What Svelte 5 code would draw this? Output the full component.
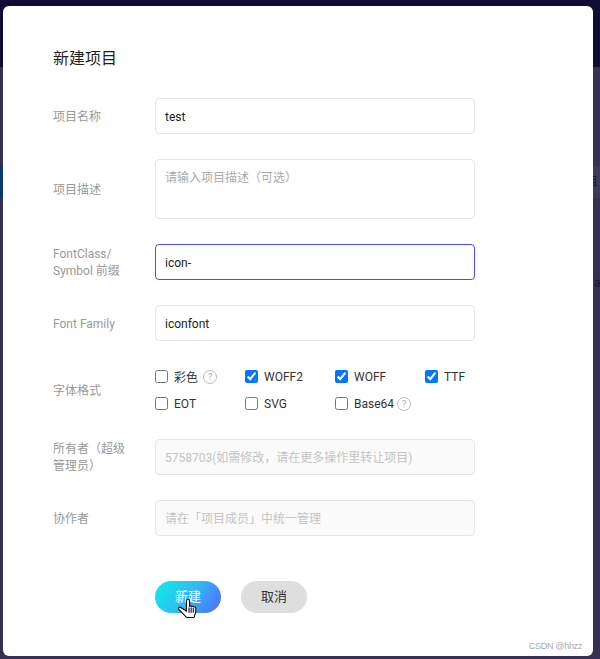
<script>
  const formats = [
    { name: '彩色', checked: false, help: true },
    { name: 'WOFF2', checked: true },
    { name: 'WOFF', checked: true },
    { name: 'TTF', checked: true },
    { name: 'EOT', checked: false },
    { name: 'SVG', checked: false },
    { name: 'Base64', checked: false, help: true }
  ];
</script>

<div class="page">
  <div class="topbar"></div>
  <div class="under left"></div>
  <div class="under right"><span>目</span></div>
  <span class="stray">a</span>

  <div class="modal">
    <h2 class="title">新建项目</h2>

    <div class="field">
      <span class="label">项目名称</span>
      <div class="input">test</div>
    </div>

    <div class="field">
      <span class="label">项目描述</span>
      <div class="input area placeholder">请输入项目描述（可选）</div>
    </div>

    <div class="field">
      <span class="label">FontClass/<br />Symbol 前缀</span>
      <div class="input focused">icon-</div>
    </div>

    <div class="field">
      <span class="label">Font Family</span>
      <div class="input">iconfont</div>
    </div>

    <div class="field">
      <span class="label">字体格式</span>
      <div class="formats">
        {#each formats as f}
          <label class="format">
            <input type="checkbox" checked={f.checked} />
            <span>{f.name}</span>
            {#if f.help}<i class="help">?</i>{/if}
          </label>
        {/each}
      </div>
    </div>

    <div class="field">
      <span class="label">所有者（超级<br />管理员）</span>
      <div class="input disabled">5758703(如需修改，请在更多操作里转让项目)</div>
    </div>

    <div class="field">
      <span class="label">协作者</span>
      <div class="input disabled">请在「项目成员」中统一管理</div>
    </div>

    <div class="actions">
      <button class="btn primary">新建
        <svg class="cursor" width="20" height="21" viewBox="0 0 19 18">
          <path d="M9.500.5c.9 0 1.500.6 1.500 1.500v4.800c.8-.4 1.600-.3 2 .3.800-.4 1.600-.2 2 .4.900-.3 1.900.2 1.900 1.300v3.200c0 1-.3 1.700-.8 2.500l-.6 2.500c-.1.300-.3.500-.6.500H8.500c-.3 0-.5-.1-.7-.3L1 10c-.6-.7-.5-1.500.1-2 .6-.4 1.400-.3 2 .3l4.900 3.200V2c0-.9.600-1.500 1.500-1.500z" fill="#fff" stroke="#000" stroke-width="1"/>
          <path d="M10.500 8v5M12.500 8v5M14.500 8.500v4.500" stroke="#000" stroke-width="1" fill="none"/>
        </svg>
      </button>
      <button class="btn cancel">取消</button>
    </div>

    <span class="watermark">CSDN @hhzz</span>
  </div>
</div>

<style>
  :global(body) {
    margin: 0;
    background: #373055;
  }

  .page {
    position: relative;
    width: 600px;
    height: 659px;
    overflow: hidden;
    background: #373055;
    font-family: Roboto, "Noto Sans CJK SC", sans-serif;
  }

  .topbar {
    height: 67px;
    background: #110c33;
  }

  /* bits of the dimmed page showing beside the dialog */
  .under {
    position: absolute;
    top: 166px;
    width: 8px;
    height: 32px;
  }

  .left {
    left: 0;
    background: #0e3868;
  }

  .right {
    right: 0;
    background: #3e3a5a;
    font-size: 12px;
    line-height: 32px;
    color: #1d1838;
  }

  .right span {
    display: block;
    margin-left: -6px;
  }

  .stray {
    position: absolute;
    left: 594px;
    top: 276px;
    font-size: 12px;
    color: #1d1838;
  }

  /* dialog sits over the dimmed page */
  .modal {
    position: absolute;
    left: 3px;
    top: 6px;
    width: 590px;
    height: 650px;
    box-sizing: border-box;
    padding: 41px 50px 0;
    background: #fff;
    border-radius: 6px;
    display: flex;
    flex-direction: column;
  }

  .title {
    margin: 0 0 27px;
    height: 24px;
    font-size: 16px;
    line-height: 24px;
    font-weight: 400;
    color: #1f1f1f;
  }

  .field {
    display: flex;
    align-items: center;
    margin-bottom: 25px;
  }

  .label {
    width: 102px;
    flex: none;
    padding-top: 2px;
    font-size: 12px;
    line-height: 17px;
    color: #999;
  }

  .input {
    width: 320px;
    height: 36px;
    box-sizing: border-box;
    padding: 1px 9px 0;
    border: 1px solid #e6e6e6;
    border-radius: 4px;
    background: #fff;
    font-size: 12px;
    line-height: 34px;
    color: #222;
  }

  .area {
    height: 60px;
    line-height: 17px;
    padding-top: 10px;
  }

  .placeholder {
    color: #aaa;
  }

  .focused {
    border-color: #4b4fe8;
  }

  .disabled {
    background: #fafafa;
    color: #c4c4c4;
  }

  .formats {
    width: 320px;
    display: grid;
    grid-template-columns: 90px 90px 90px 50px;
    grid-auto-rows: 27px;
    margin: -3px 0;
  }

  .format {
    display: flex;
    align-items: center;
    font-size: 12px;
    color: #333;
    white-space: nowrap;
  }

  .format input {
    width: 13px;
    height: 13px;
    margin: 0 6px 0 0;
    accent-color: #0075ff;
  }

  .help {
    width: 12px;
    height: 12px;
    margin-left: 5px;
    border: 1px solid #bbb;
    border-radius: 50%;
    font-size: 9px;
    line-height: 12px;
    font-style: normal;
    text-align: center;
    color: #aaa;
  }

  .format:last-child .help {
    margin-left: 3px;
  }

  .actions {
    display: flex;
    gap: 20px;
    margin: 20px 0 0 102px;
  }

  .btn {
    position: relative;
    width: 66px;
    height: 32px;
    padding: 0 0 3px;
    border: 0;
    border-radius: 16px;
    font-family: inherit;
    font-size: 13px;
  }

  .primary {
    color: #fff;
    background: linear-gradient(125deg, #0cf0e6 0%, #35b4f4 55%, #5268ff 100%);
  }

  .cancel {
    color: #333;
    background: #dedede;
  }

  .cursor {
    position: absolute;
    left: 23px;
    top: 17px;
    overflow: visible;
  }

  .watermark {
    position: absolute;
    right: 11px;
    bottom: 5px;
    font-family: "Liberation Sans", sans-serif;
    font-size: 9px;
    letter-spacing: -0.3px;
    color: #a8a8a8;
  }
</style>
